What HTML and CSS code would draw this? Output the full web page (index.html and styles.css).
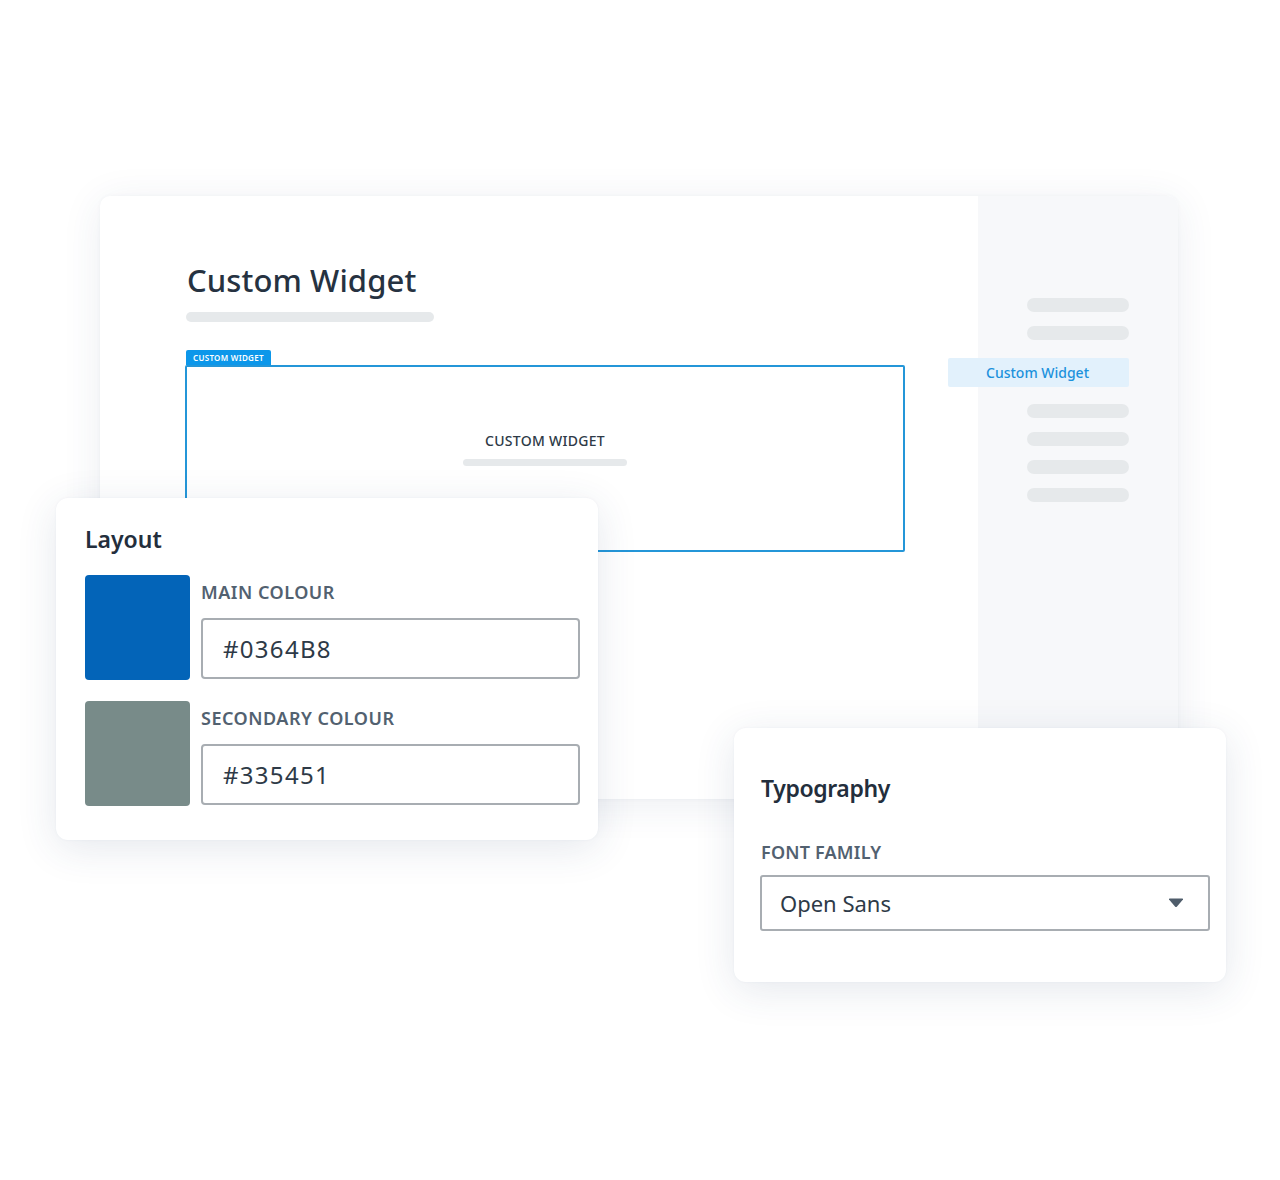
FILE: index.html
```html
<!DOCTYPE html>
<html>
<head>
<meta charset="utf-8">
<link rel="stylesheet" href="styles.css">
</head>
<body>
<div class="stage">
  <section class="main-card">
    <div class="content">
      <h1 class="title">Custom Widget</h1>
      <div class="bar title-bar"></div>
      <div class="widget">
        <span class="widget-tag">CUSTOM WIDGET</span>
        <div class="widget-box">
          <div class="widget-label">CUSTOM WIDGET</div>
          <div class="bar widget-bar"></div>
        </div>
      </div>
    </div>
    <aside class="sidebar">
      <div class="bar side-bar"></div>
      <div class="bar side-bar"></div>
      <div class="side-active">Custom Widget</div>
      <div class="bar side-bar"></div>
      <div class="bar side-bar"></div>
      <div class="bar side-bar"></div>
      <div class="bar side-bar"></div>
    </aside>
  </section>

  <section class="panel layout-panel">
    <h2 class="panel-title">Layout</h2>
    <div class="colour-row">
      <div class="swatch swatch-main"></div>
      <div class="field">
        <div class="field-label">MAIN COLOUR</div>
        <div class="input">#0364B8</div>
      </div>
    </div>
    <div class="colour-row">
      <div class="swatch swatch-secondary"></div>
      <div class="field">
        <div class="field-label">SECONDARY COLOUR</div>
        <div class="input">#335451</div>
      </div>
    </div>
  </section>

  <section class="panel type-panel">
    <h2 class="panel-title type-title">Typography</h2>
    <div class="field-label type-label">FONT FAMILY</div>
    <div class="select">
      <span>Open Sans</span>
      <svg class="caret" width="16" height="10" viewBox="0 0 16 10"><path d="M1 1.5 Q0.5 0.5 2 0.5 H14 Q15.5 0.5 15 1.5 L9 8.5 Q8 9.5 7 8.5 Z" fill="#4f5d6b"/></svg>
    </div>
  </section>
</div>
</body>
</html>
```
FILE: styles.css
```css
* { box-sizing: border-box; }
html, body { margin: 0; padding: 0; background: #ffffff; }
body {
  font-family: "Noto Sans", "Open Sans", sans-serif;
  color: #2a3443;
}
.stage {
  position: relative;
  width: 1280px;
  height: 1180px;
}
.bar {
  background: #e6e9eb;
  border-radius: 6px;
}

/* main card */
.main-card {
  position: absolute;
  left: 100px;
  top: 196px;
  width: 1078px;
  height: 603px;
  background: #ffffff;
  border-radius: 10px;
  box-shadow: 0 6px 40px rgba(44, 66, 110, 0.09), 0 0 4px rgba(44, 66, 110, 0.04);
  display: grid;
  grid-template-columns: 878px 200px;
}
.content {
  padding: 62px 0 0 85px;
}
.title {
  margin: 0 0 0 2px;
  font-size: 31px;
  line-height: 44px;
  font-weight: 500;
  color: #263241;
  letter-spacing: 0.1px;
}
.title-bar {
  margin-top: 10px;
  width: 248px;
  height: 10px;
  margin-left: 1px;
}
.widget {
  margin-top: 28px;
  display: flex;
  flex-direction: column;
  align-items: flex-start;
}
.widget-tag {
  margin-left: 1px;
  background: #0c97ea;
  color: #ffffff;
  font-size: 8px;
  font-weight: 600;
  line-height: 15px;
  padding: 0 7px;
  border-radius: 2px 2px 0 0;
  letter-spacing: 0.3px;
}
.widget-box {
  width: 720px;
  height: 187px;
  border: 2px solid #2496d8;
  border-radius: 2px;
  display: flex;
  flex-direction: column;
  align-items: center;
  padding-top: 64px;
}
.widget-label {
  font-size: 14px;
  line-height: 20px;
  font-weight: 500;
  color: #2e3a47;
  letter-spacing: 0.3px;
}
.widget-bar {
  margin-top: 8px;
  width: 164px;
  height: 7px;
  border-radius: 4px;
}

/* sidebar */
.sidebar {
  background: #f7f8fa;
  display: flex;
  flex-direction: column;
  align-items: flex-start;
  padding: 102px 0 0 49px;
  border-radius: 0 10px 10px 0;
}
.side-bar {
  width: 102px;
  height: 14px;
  border-radius: 7px;
  margin-bottom: 14px;
  background: #e6e9eb;
}
.side-active {
  margin: 4px 0 17px -79px;
  width: 181px;
  height: 29px;
  background: #e2f1fc;
  color: #1c92dc;
  font-size: 14px;
  font-weight: 500;
  line-height: 30px;
  padding-left: 38px;
  border-radius: 2px;
}

/* panels */
.panel {
  position: absolute;
  background: #ffffff;
  border-radius: 12px;
  box-shadow: 0 8px 40px rgba(44, 66, 110, 0.12), 0 0 3px rgba(44, 66, 110, 0.05);
}
.panel-title {
  margin: 0;
  font-size: 23px;
  line-height: 32px;
  font-weight: 600;
  color: #232e3c;
}
.type-title {
  letter-spacing: -0.4px;
}
.layout-panel {
  left: 56px;
  top: 498px;
  width: 542px;
  height: 342px;
  padding: 25px 18px 0 29px;
}
.colour-row {
  display: flex;
  gap: 11px;
  margin-top: 20px;
}
.colour-row + .colour-row { margin-top: 21px; }
.swatch {
  width: 105px;
  height: 105px;
  border-radius: 4px;
  flex: none;
}
.swatch-main { background: #0364b8; }
.swatch-secondary { background: #788b89; }
.field {
  flex: 1;
  display: flex;
  flex-direction: column;
}
.field-label {
  font-size: 18px;
  line-height: 34px;
  font-weight: 600;
  color: #526170;
  letter-spacing: 0.5px;
  margin-top: 0;
}
.input {
  margin-top: 9px;
  height: 61px;
  border: 2px solid #a8adb2;
  border-radius: 4px;
  font-size: 24px;
  line-height: 57px;
  padding-left: 20px;
  color: #2e3a47;
  letter-spacing: 1.3px;
}
.type-panel {
  left: 734px;
  top: 728px;
  width: 492px;
  height: 254px;
  padding: 44px 16px 0 27px;
}
.type-label {
  margin-top: 31px;
  letter-spacing: 0.2px;
}
.select {
  margin-top: 6px;
  margin-left: -1px;
  height: 56px;
  border: 2px solid #a8adb2;
  border-radius: 3px;
  display: flex;
  align-items: center;
  justify-content: space-between;
  padding: 0 24px 0 18px;
  font-size: 22px;
  color: #2e3a47;
}
.caret { display: block; }
```
